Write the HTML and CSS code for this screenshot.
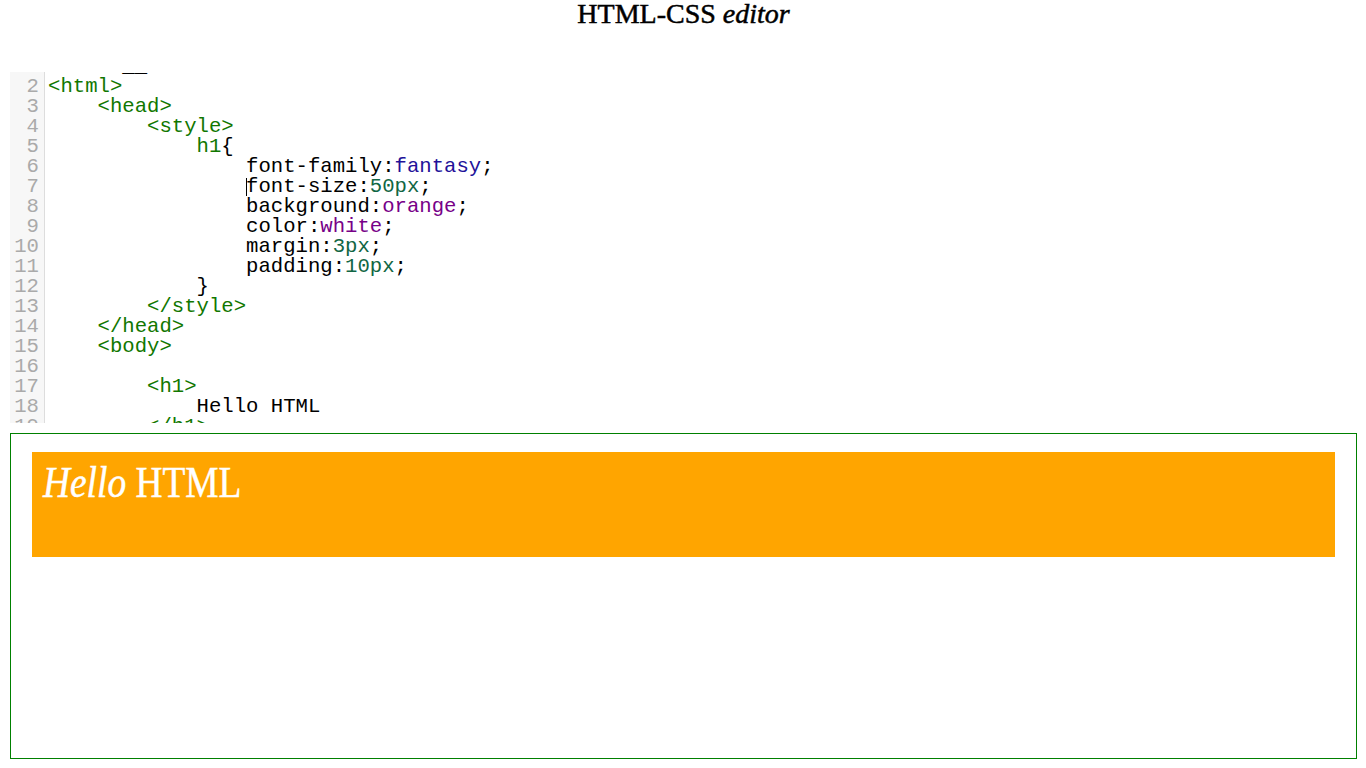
FILE: index.html
```html
<!DOCTYPE html>
<html lang="en">
<head>
<meta charset="utf-8">
<title>HTML-CSS editor</title>
<link rel="stylesheet" href="styles.css">
</head>
<body>
<h1 class="title">HTML-CSS <i class="slant">editor</i></h1>
<div class="editor">
<div class="lines">
<div class="row"><span class="num">1</span><span class="code">      __</span></div>
<div class="row"><span class="num">2</span><span class="code"><span class="tag">&lt;html&gt;</span></span></div>
<div class="row"><span class="num">3</span><span class="code">    <span class="tag">&lt;head&gt;</span></span></div>
<div class="row"><span class="num">4</span><span class="code">        <span class="tag">&lt;style&gt;</span></span></div>
<div class="row"><span class="num">5</span><span class="code">            <span class="tag">h1</span>{</span></div>
<div class="row"><span class="num">6</span><span class="code">                font-family:<span class="atom">fantasy</span>;</span></div>
<div class="row"><span class="num">7</span><span class="code">                <span class="cursor"></span>font-size:<span class="number">50px</span>;</span></div>
<div class="row"><span class="num">8</span><span class="code">                background:<span class="keyword">orange</span>;</span></div>
<div class="row"><span class="num">9</span><span class="code">                color:<span class="keyword">white</span>;</span></div>
<div class="row"><span class="num">10</span><span class="code">                margin:<span class="number">3px</span>;</span></div>
<div class="row"><span class="num">11</span><span class="code">                padding:<span class="number">10px</span>;</span></div>
<div class="row"><span class="num">12</span><span class="code">            }</span></div>
<div class="row"><span class="num">13</span><span class="code">        <span class="tag">&lt;/style&gt;</span></span></div>
<div class="row"><span class="num">14</span><span class="code">    <span class="tag">&lt;/head&gt;</span></span></div>
<div class="row"><span class="num">15</span><span class="code">    <span class="tag">&lt;body&gt;</span></span></div>
<div class="row"><span class="num">16</span><span class="code"> </span></div>
<div class="row"><span class="num">17</span><span class="code">        <span class="tag">&lt;h1&gt;</span></span></div>
<div class="row"><span class="num">18</span><span class="code">            Hello HTML</span></div>
<div class="row"><span class="num">19</span><span class="code">        <span class="tag">&lt;/h1&gt;</span></span></div>
</div>
</div>
<div class="preview">
<h1 class="hello"><span class="hello-text"><i class="slant">Hello</i> HTML</span></h1>
</div>
</body>
</html>
```
FILE: styles.css
```css
html, body {
  margin: 0;
  padding: 0;
  background: #fff;
}
body {
  padding: 0 9px 0 10px;
  height: 768px;
  overflow: hidden;
  box-sizing: border-box;
}
.title {
  margin: 0;
  height: 72px;
  text-align: center;
  font-family: "Liberation Serif", serif;
  font-size: 28px;
  font-weight: 400;
  line-height: 28px;
  color: #000;
  -webkit-text-stroke: 0.5px #000;
}
.slant { font-style: italic; }
.editor {
  height: 351px;
  overflow: hidden;
  font-family: "Liberation Mono", monospace;
  font-size: 20.64px;
  line-height: 20px;
  color: #000;
}
.lines { margin-top: -15px; }
.row {
  display: flex;
  height: 20px;
}
.num {
  flex: none;
  box-sizing: border-box;
  width: 35px;
  padding-right: 5px;
  text-align: right;
  color: #aaa;
  background: #f7f7f7;
  border-right: 1px solid #ddd;
}
.code {
  position: relative;
  padding-left: 3px;
  white-space: pre;
}
.tag { color: #170; }
.atom { color: #219; }
.number { color: #164; }
.keyword { color: #708; }
.cursor {
  position: absolute;
  width: 1px;
  height: 18px;
  margin-top: 1px;
  background: #000;
}
.preview {
  box-sizing: border-box;
  height: 326px;
  margin-top: 10px;
  padding: 18px 21px 0;
  border: 1px solid #008000;
}
.hello {
  box-sizing: border-box;
  height: 105px;
  margin: 0;
  padding: 6px 11px 0;
  background: #ffa500;
  color: #fff;
  font-family: "Liberation Serif", serif;
  font-size: 44px;
  font-weight: 400;
  line-height: 50px;
  -webkit-text-stroke: 0.5px #fff;
}
.hello-text {
  display: inline-block;
  transform: scaleX(0.85);
  transform-origin: left center;
}
```
